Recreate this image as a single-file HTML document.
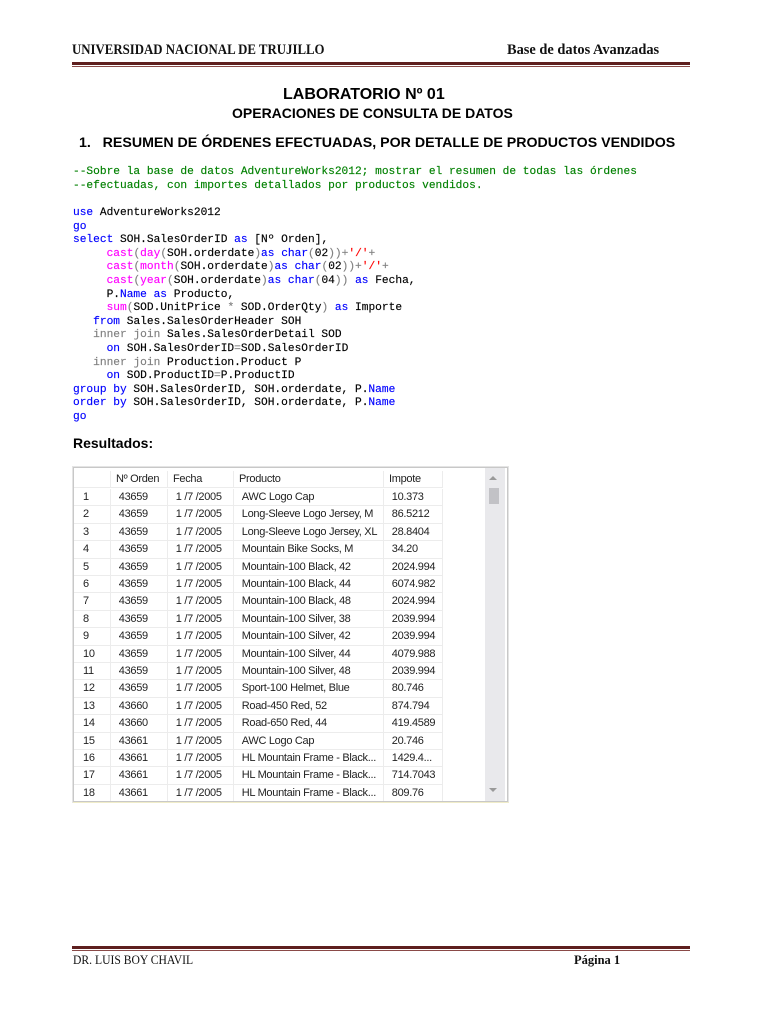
<!DOCTYPE html>
<html><head><meta charset="utf-8"><style>
body{margin:0;background:#fff;width:768px;height:1024px;position:relative;overflow:hidden;font-family:"Liberation Sans",sans-serif;color:#000}
.a{position:absolute;white-space:pre}
.serif{font-family:"Liberation Serif",serif;font-weight:bold;font-size:14.5px;color:#111}
.code{font-family:"Liberation Mono",monospace;font-size:11.2px;line-height:13.6px;left:73px;position:absolute;white-space:pre;color:#000;-webkit-text-stroke:0.15px}
.k{color:#0000ff}.f{color:#ff00ff}.g{color:#808080}.s{color:#ff0000}.c{color:#008000}
.tbl{position:absolute;left:73px;top:467px;width:433px;height:333px;border:1px solid #c8c8c8;box-shadow:0 0 0 1px #e4e4e4;background:#fff;overflow:hidden;font-size:11px;letter-spacing:-0.3px;color:#222}
.row{position:absolute;left:0;height:17.4px;width:368px}
.row div{position:absolute;top:0;height:17.4px;line-height:17.4px;border-right:1px solid #ececec;border-bottom:1px solid #ececec;box-sizing:border-box;padding-left:5px;overflow:hidden;white-space:nowrap}
</style></head><body>
<div class="a serif" style="left:72px;top:42px;font-size:14.5px;transform:scaleX(0.885);transform-origin:0 0">UNIVERSIDAD NACIONAL DE TRUJILLO</div>
<div class="a serif" style="left:507px;top:42px;font-size:15px;transform:scaleX(0.96);transform-origin:0 0">Base de datos Avanzadas</div>
<div style="position:absolute;left:72px;top:62px;width:618px;height:3px;background:#5e1f1e"></div>
<div style="position:absolute;left:72px;top:66px;width:618px;height:1px;background:#8a4a48"></div>

<div class="a" style="left:283px;top:86px;font-size:16px;font-weight:bold">LABORATORIO Nº 01</div>
<div class="a" style="left:232px;top:105px;font-size:14px;font-weight:bold">OPERACIONES DE CONSULTA DE DATOS</div>
<div class="a" style="left:79px;top:135px;font-size:14.2px;font-weight:bold">1.&nbsp;&nbsp; RESUMEN DE ÓRDENES EFECTUADAS, POR DETALLE DE PRODUCTOS VENDIDOS</div>

<div class="code c" style="top:166px;color:#008000">--Sobre la base de datos AdventureWorks2012; mostrar el resumen de todas las órdenes
--efectuadas, con importes detallados por productos vendidos.</div>

<div class="code" style="top:207px"><span class="k">use</span> AdventureWorks2012
<span class="k">go</span>
<span class="k">select</span> SOH.SalesOrderID <span class="k">as</span> [Nº Orden],
     <span class="f">cast</span><span class="g">(</span><span class="f">day</span><span class="g">(</span>SOH.orderdate<span class="g">)</span><span class="k">as</span> <span class="k">char</span><span class="g">(</span>02<span class="g">))+</span><span class="s">'/'</span><span class="g">+</span>
     <span class="f">cast</span><span class="g">(</span><span class="f">month</span><span class="g">(</span>SOH.orderdate<span class="g">)</span><span class="k">as</span> <span class="k">char</span><span class="g">(</span>02<span class="g">))+</span><span class="s">'/'</span><span class="g">+</span>
     <span class="f">cast</span><span class="g">(</span><span class="f">year</span><span class="g">(</span>SOH.orderdate<span class="g">)</span><span class="k">as</span> <span class="k">char</span><span class="g">(</span>04<span class="g">))</span> <span class="k">as</span> Fecha,
     P.<span class="k">Name</span> <span class="k">as</span> Producto,
     <span class="f">sum</span><span class="g">(</span>SOD.UnitPrice <span class="g">*</span> SOD.OrderQty<span class="g">)</span> <span class="k">as</span> Importe
   <span class="k">from</span> Sales.SalesOrderHeader SOH
   <span class="g">inner join</span> Sales.SalesOrderDetail SOD
     <span class="k">on</span> SOH.SalesOrderID<span class="g">=</span>SOD.SalesOrderID
   <span class="g">inner join</span> Production.Product P
     <span class="k">on</span> SOD.ProductID<span class="g">=</span>P.ProductID
<span class="k">group by</span> SOH.SalesOrderID, SOH.orderdate, P.<span class="k">Name</span>
<span class="k">order by</span> SOH.SalesOrderID, SOH.orderdate, P.<span class="k">Name</span>
<span class="k">go</span></div>

<div class="a" style="left:73px;top:435px;font-size:14px;font-weight:bold">Resultados:</div>

<div class="tbl" id="t">
<div style="position:absolute;left:411px;top:0;width:20px;height:333px;background:#e9e9ec"></div>
<div style="position:absolute;left:415px;top:20px;width:10px;height:16px;background:#c2c2c6"></div>
<div style="position:absolute;left:415px;top:8px;width:0;height:0;border-left:4px solid transparent;border-right:4px solid transparent;border-bottom:4px solid #9a9a9a"></div>
<div style="position:absolute;left:415px;top:320px;width:0;height:0;border-left:4px solid transparent;border-right:4px solid transparent;border-top:4px solid #9a9a9a"></div>
</div>
<div style="position:absolute;left:73px;top:802px;width:436px;height:1px;background:#f0ecc8"></div>
<script>
var d=[["43659","AWC Logo Cap","10.373"],["43659","Long-Sleeve Logo Jersey, M","86.5212"],["43659","Long-Sleeve Logo Jersey, XL","28.8404"],["43659","Mountain Bike Socks, M","34.20"],["43659","Mountain-100 Black, 42","2024.994"],["43659","Mountain-100 Black, 44","6074.982"],["43659","Mountain-100 Black, 48","2024.994"],["43659","Mountain-100 Silver, 38","2039.994"],["43659","Mountain-100 Silver, 42","2039.994"],["43659","Mountain-100 Silver, 44","4079.988"],["43659","Mountain-100 Silver, 48","2039.994"],["43659","Sport-100 Helmet, Blue","80.746"],["43660","Road-450 Red, 52","874.794"],["43660","Road-650 Red, 44","419.4589"],["43661","AWC Logo Cap","20.746"],["43661","HL Mountain Frame - Black...","1429.4..."],["43661","HL Mountain Frame - Black...","714.7043"],["43661","HL Mountain Frame - Black...","809.76"]];
var cols=[[0,37],[37,57],[94,66],[160,150],[310,59]];
function row(y,v){var h='<div class="row" style="top:'+y+'px">';for(var i=0;i<5;i++)h+='<div style="left:'+cols[i][0]+'px;width:'+cols[i][1]+'px;'+(i==0?'padding-left:9px;':'')+'">'+v[i]+'</div>';return h+'</div>';}
var h=row(3,["","Nº Orden","Fecha","Producto","Impote"]);
for(var r=0;r<18;r++){var x=d[r];h+=row(21+r*17.4,[String(r+1),"&nbsp;"+x[0],"&nbsp;1 /7 /2005","&nbsp;"+x[1],"&nbsp;"+x[2]]);}
document.getElementById('t').insertAdjacentHTML('afterbegin',h);
</script>

<div style="position:absolute;left:72px;top:946px;width:618px;height:3px;background:#5e1f1e"></div>
<div style="position:absolute;left:72px;top:950px;width:618px;height:1px;background:#8a4a48"></div>
<div class="a" style="left:73px;top:953px;font-family:'Liberation Serif',serif;font-size:12.5px;color:#111;transform:scaleX(0.93);transform-origin:0 0">DR. LUIS BOY CHAVIL</div>
<div class="a" style="left:574px;top:953px;font-family:'Liberation Serif',serif;font-size:12.5px;font-weight:bold;color:#111">Página 1</div>
</body></html>
